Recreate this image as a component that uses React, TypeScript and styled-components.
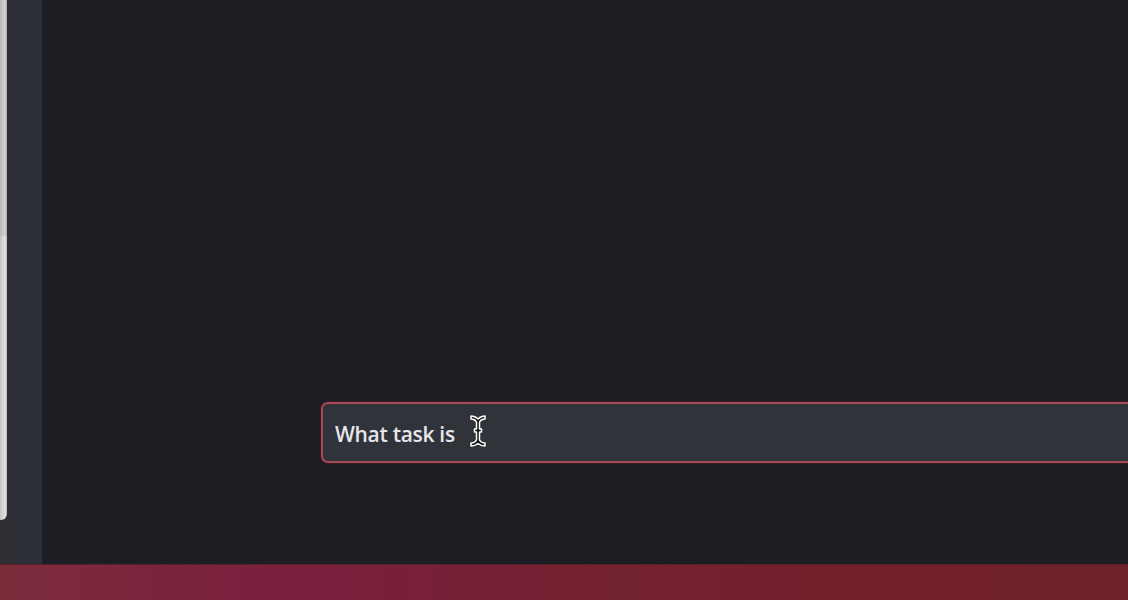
import React from "react"
import styled, { createGlobalStyle } from "styled-components"

const Global = createGlobalStyle`
  html, body { margin: 0; padding: 0; background: #1c1e24; }
  #root { width: 1128px; height: 600px; overflow: hidden; }
`

const Screen = styled.div`
  display: flex;
  flex-direction: column;
  width: 1128px;
  height: 600px;
`

const Workspace = styled.div`
  flex: 1;
  display: flex;
  min-height: 0;
`

const Edge = styled.div`
  width: 15px;
  display: flex;
  background: #302e34;
`

const Panel = styled.div`
  width: 7px;
  height: 520px;
  background: linear-gradient(to right, #c4c4c4, #e2e2e2 70%, #bdbdbd);
  border-bottom-right-radius: 6px;
  display: flex;
  flex-direction: column;
`

const Thumb = styled.div`
  height: 236px;
  background: linear-gradient(to right, #b8b8b8, #d4d4d4 70%, #a9a9a9);
`

const Sidebar = styled.div`
  width: 27px;
  background: #2d3038;
`

const Main = styled.main`
  flex: 1;
  display: flex;
  flex-direction: column;
  justify-content: flex-end;
  padding: 0 0 101px 279px;
  background: #1c1e24;
`

const Field = styled.div`
  height: 57px;
  margin-right: -20px;
  display: flex;
  align-items: center;
  gap: 14px;
  padding: 0 12px;
  background: #31333b;
  border: 2px solid #a5495a;
  border-radius: 7px;
  box-shadow: 0 0 0 1px #3a1c24;
`

const Text = styled.span`
  font-family: "Open Sans", "Noto Sans", sans-serif;
  font-size: 21px;
  font-weight: 600;
  color: #e6e6ea;
  letter-spacing: -0.3px;
  margin-top: 2px;
`

const Footer = styled.div`
  height: 35px;
  border-top: 1px solid #5a1f2a;
  background: linear-gradient(to right, #7b2c3a 0%, #7a1f3e 26%, #73222f 55%, #721f2b 80%, #6e2229 100%);
`

const Cursor = () => (
  <svg width="18" height="34" viewBox="0 0 18 34" style={{ marginTop: -4 }}>
    <path
      d="M2 2 Q6 2 9 5 Q12 2 16 2 L16 5 Q12 5 10.5 8 L10.5 15 L12.5 15 L12.5 18 L10.5 18 L10.5 26 Q12 29 16 29 L16 32 Q12 32 9 29.5 Q6 32 2 32 L2 29 Q6 29 7.5 26 L7.5 18 L5.5 18 L5.5 15 L7.5 15 L7.5 8 Q6 5 2 5 Z"
      fill="#0c0c0c"
      stroke="#fff"
      strokeWidth="1.5"
      strokeLinejoin="round"
    />
  </svg>
)

export default function App() {
  return (
    <Screen>
      <Global />
      <Workspace>
        <Edge>
          <Panel>
            <Thumb />
          </Panel>
        </Edge>
        <Sidebar />
        <Main>
          <Field>
            <Text>What task is</Text>
            <Cursor />
          </Field>
        </Main>
      </Workspace>
      <Footer />
    </Screen>
  )
}
